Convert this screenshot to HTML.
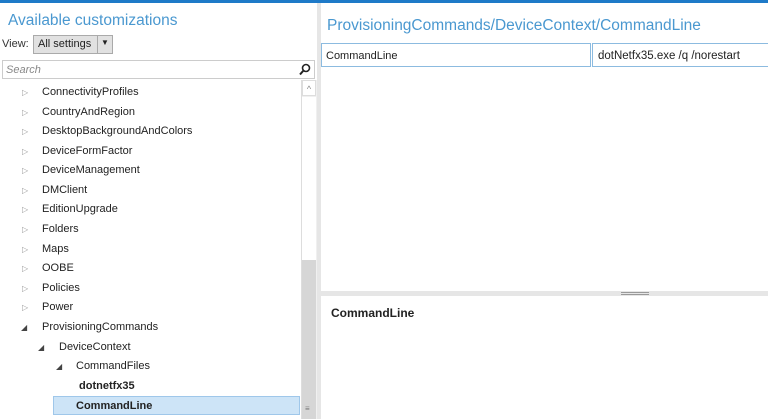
<!DOCTYPE html>
<html><head><style>
*{margin:0;padding:0;box-sizing:border-box}
body{width:768px;height:419px;overflow:hidden;background:#fff;font-family:"Liberation Sans",sans-serif;font-size:11px;color:#222;position:relative}
.a{position:absolute}
.row{position:absolute;height:19px;line-height:19px;white-space:nowrap}
.tri{position:absolute;font-size:8px;color:#999}
</style></head><body>
<div class="a" style="left:0;top:0;width:768px;height:3px;background:#1e7ac8"></div>
<div class="a" style="left:8px;top:12px;font-size:15.5px;color:#4a98d0">Available customizations</div>
<div class="a" style="left:2px;top:38px;font-size:11px;color:#333">View:</div>
<div class="a" style="left:33px;top:35px;width:80px;height:19px;background:#e1e1e1;border:1px solid #aaa"></div>
<div class="a" style="left:38px;top:38px;font-size:11px">All settings</div>
<div class="a" style="left:97px;top:35px;width:1px;height:19px;background:#aaa"></div>
<div class="a" style="left:101px;top:38px;font-size:8px">▼</div>
<div class="a" style="left:2px;top:60px;width:313px;height:19px;border:1px solid #ccc"></div>
<div class="a" style="left:6px;top:64px;font-size:11px;color:#888;font-style:italic">Search</div>
<svg class="a" style="left:299px;top:63px" width="12" height="13"><circle cx="7" cy="5" r="3.5" fill="none" stroke="#222" stroke-width="1.6"/><line x1="4.5" y1="7.5" x2="1" y2="11.5" stroke="#222" stroke-width="2"/></svg>
<div class="a" style="left:301px;top:80px;width:16px;height:339px;background:#f0f0f0;border-left:1px solid #ddd"></div>
<div class="a" style="left:302px;top:80px;width:14px;height:16px;background:#fff;border:1px solid #ddd;text-align:center;font-size:9px;color:#888;line-height:16px">^</div>
<div class="a" style="left:302px;top:97px;width:14px;height:163px;background:#fff"></div>
<div class="a" style="left:302px;top:260px;width:14px;height:159px;background:#d6d6d6"></div>
<div class="a" style="left:305px;top:404px;font-size:8px;color:#777">≡</div>
<div class="a" style="left:317px;top:3px;width:4px;height:416px;background:#e6e6e6"></div>

<div class="a" style="left:53px;top:396px;width:247px;height:19px;background:#cde4f7;border:1px solid #9fc7ea"></div>
<div class="tri" style="left:22px;top:88px">▷</div><div class="row" style="left:42px;top:83px">ConnectivityProfiles</div>
<div class="tri" style="left:22px;top:108px">▷</div><div class="row" style="left:42px;top:103px">CountryAndRegion</div>
<div class="tri" style="left:22px;top:127px">▷</div><div class="row" style="left:42px;top:122px">DesktopBackgroundAndColors</div>
<div class="tri" style="left:22px;top:147px">▷</div><div class="row" style="left:42px;top:142px">DeviceFormFactor</div>
<div class="tri" style="left:22px;top:166px">▷</div><div class="row" style="left:42px;top:161px">DeviceManagement</div>
<div class="tri" style="left:22px;top:186px">▷</div><div class="row" style="left:42px;top:181px">DMClient</div>
<div class="tri" style="left:22px;top:205px">▷</div><div class="row" style="left:42px;top:200px">EditionUpgrade</div>
<div class="tri" style="left:22px;top:225px">▷</div><div class="row" style="left:42px;top:220px">Folders</div>
<div class="tri" style="left:22px;top:245px">▷</div><div class="row" style="left:42px;top:240px">Maps</div>
<div class="tri" style="left:22px;top:264px">▷</div><div class="row" style="left:42px;top:259px">OOBE</div>
<div class="tri" style="left:22px;top:284px">▷</div><div class="row" style="left:42px;top:279px">Policies</div>
<div class="tri" style="left:22px;top:303px">▷</div><div class="row" style="left:42px;top:298px">Power</div>
<div class="tri" style="left:21px;top:323px;color:#444">◢</div><div class="row" style="left:42px;top:318px">ProvisioningCommands</div>
<div class="tri" style="left:38px;top:343px;color:#444">◢</div><div class="row" style="left:59px;top:338px">DeviceContext</div>
<div class="tri" style="left:56px;top:362px;color:#444">◢</div><div class="row" style="left:76px;top:357px">CommandFiles</div>
<div class="row" style="left:79px;top:377px;font-weight:bold">dotnetfx35</div>
<div class="row" style="left:76px;top:397px;font-weight:bold">CommandLine</div>

<div class="a" style="left:327px;top:17px;font-size:15.5px;color:#4a98d0">ProvisioningCommands/DeviceContext/CommandLine</div>
<div class="a" style="left:321px;top:43px;width:270px;height:24px;border:1px solid #8cbbe0"></div>
<div class="a" style="left:326px;top:50px;font-size:11px">CommandLine</div>
<div class="a" style="left:592px;top:43px;width:180px;height:24px;border:1px solid #8cbbe0"></div>
<div class="a" style="left:598px;top:50px;font-size:11.5px">dotNetfx35.exe /q /norestart</div>
<div class="a" style="left:321px;top:291px;width:447px;height:5px;background:#e6e6e6"></div>
<div class="a" style="left:621px;top:292px;width:28px;height:1px;background:#999"></div>
<div class="a" style="left:621px;top:294px;width:28px;height:1px;background:#999"></div>
<div class="a" style="left:331px;top:306px;font-size:12px;font-weight:bold;color:#222">CommandLine</div>
</body></html>
